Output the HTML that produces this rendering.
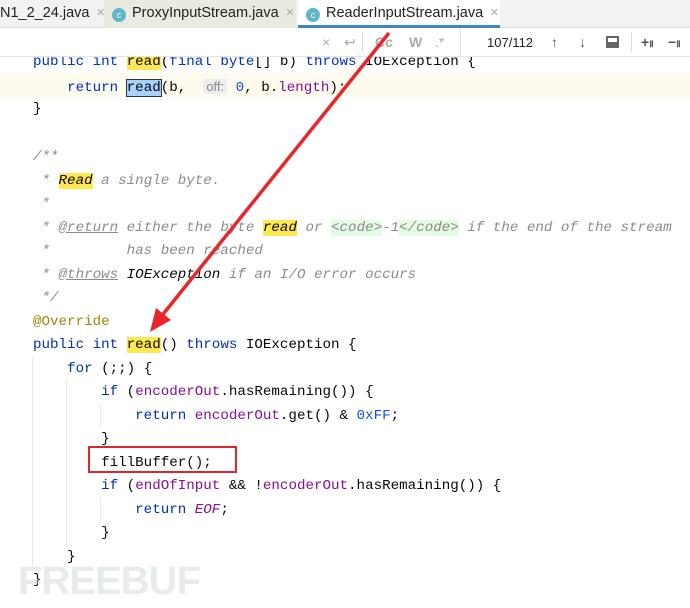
<!DOCTYPE html>
<html><head><meta charset="utf-8"><style>
*{margin:0;padding:0;box-sizing:border-box}
body{width:690px;height:608px;overflow:hidden;background:#fff;position:relative;font-family:"Liberation Mono",monospace}
.tabs{position:absolute;left:0;top:0;width:690px;height:28px;background:#f2f2f2;border-bottom:1px solid #ddd;font-family:"Liberation Sans",sans-serif;font-size:14.5px;color:#222}
.tab{position:absolute;top:0;height:28px;line-height:27px;white-space:nowrap}
.ic{display:inline-block;width:14px;height:14px;border-radius:50%;background:#5fb7c9;color:#fff;font-size:9px;line-height:14px;text-align:center;vertical-align:-1px;margin-right:6px}
.x{color:#aaa;margin-left:7px}
.search{position:absolute;left:0;top:28px;width:690px;height:29px;background:#fff;border-bottom:1px solid #e3e3e3;z-index:3;font-family:"Liberation Sans",sans-serif;color:#888;font-size:14px}
.search span{position:absolute;top:6px}
.code{position:absolute;left:0;top:2px;width:690px;font-size:14.2px;color:#080808}
.l{position:absolute;left:33px;height:23.5px;line-height:23.5px;white-space:pre}
.k{color:#0033b3}.f{color:#871094}.n{color:#1750eb}
.c{color:#8c8c8c;font-style:italic}
.hl{background:#ffe74f}
.g{background:#e4fbe4}
.u{text-decoration:underline}
.a{color:#9e880d}
</style></head><body>
<div class="tabs">
<div class="tab" style="left:0;padding-right:8px">N1_2_24.java<span class="x">×</span></div>
<div class="tab" style="left:104px;width:192px;background:#eaeae0;padding-left:8px"><span class="ic">c</span>ProxyInputStream.java<span class="x">×</span></div>
<div class="tab" style="left:298px;width:202px;background:#fff;padding-left:8px;border-bottom:3px solid #4083c9"><span class="ic">c</span>ReaderInputStream.java<span class="x">×</span></div>
</div>
<div class="search">
<span style="left:322px;color:#aaa">×</span><span style="left:344px;color:#aaa">↩</span>
<div style="position:absolute;left:362px;top:4px;width:1px;height:20px;background:#ddd"></div>
<span style="left:375px;font-weight:bold;color:#aaa">Cc</span><span style="left:409px;font-weight:bold;color:#aaa">W</span><span style="left:435px;color:#aaa">.*</span>
<div style="position:absolute;left:460px;top:0;width:1px;height:29px;background:#e3e3e3"></div>
<span style="left:487px;color:#222;font-size:13px;top:7px">107/112</span>
<span style="left:551px;color:#555">↑</span><span style="left:579px;color:#555">↓</span>
<div style="position:absolute;left:606px;top:8px;width:13px;height:12px;border:2px solid #666;border-top-width:2px;background:linear-gradient(#fff 50%,#666 50%)"></div>
<div style="position:absolute;left:631px;top:4px;width:1px;height:20px;background:#ddd"></div>
<span style="left:641px;color:#555;font-weight:bold">+<small style="font-size:9px">Ⅱ</small></span><span style="left:668px;color:#555;font-weight:bold">−<small style="font-size:9px">Ⅱ</small></span>
</div>
<div style="position:absolute;left:0;top:73px;width:690px;height:24px;background:#fdfbee"></div>
<div class="code">
<div class="l" style="top:49px"><span class="k">public int </span><span class="hl">read</span>(<span class="k">final byte</span>[] b) <span class="k">throws</span> IOException {</div>
<div class="l" style="top:72.5px">    <span class="k">return </span><span style="background:#a6d2ff;outline:1px solid #333">read</span>(b,  <span style="background:#eee;color:#888;font-family:'Liberation Sans';font-size:13px;padding:0 3px">off:</span> <span class="n">0</span>, b.<span class="f">length</span>);</div>
<div class="l" style="top:96px">}</div>
<div class="l c" style="top:144px">/**</div>
<div class="l c" style="top:167.5px"> * <span class="hl" style="color:#080808">Read</span> a single byte.</div>
<div class="l c" style="top:191px"> *</div>
<div class="l c" style="top:214.5px"> * <span class="u">@return</span> either the byte <span class="hl" style="color:#080808">read</span> or <span class="g">&lt;code&gt;</span>-1<span class="g">&lt;/code&gt;</span> if the end of the stream</div>
<div class="l c" style="top:238px"> *         has been reached</div>
<div class="l c" style="top:261.5px"> * <span class="u">@throws</span> <span style="color:#080808">IOException</span> if an I/O error occurs</div>
<div class="l c" style="top:285px"> */</div>
<div class="l a" style="top:308.5px">@Override</div>
<div class="l" style="top:332px"><span class="k">public int </span><span class="hl">read</span>() <span class="k">throws</span> IOException {</div>
<div class="l" style="top:355.5px">    <span class="k">for</span> (;;) {</div>
<div class="l" style="top:379px">        <span class="k">if</span> (<span class="f">encoderOut</span>.hasRemaining()) {</div>
<div class="l" style="top:402.5px">            <span class="k">return </span><span class="f">encoderOut</span>.get() &amp; <span class="n">0xFF</span>;</div>
<div class="l" style="top:426px">        }</div>
<div class="l" style="top:449.5px">        fillBuffer();</div>
<div class="l" style="top:473px">        <span class="k">if</span> (<span class="f">endOfInput</span> &amp;&amp; !<span class="f">encoderOut</span>.hasRemaining()) {</div>
<div class="l" style="top:496.5px">            <span class="k">return </span><span class="f" style="font-style:italic">EOF</span>;</div>
<div class="l" style="top:520px">        }</div>
<div class="l" style="top:543.5px">    }</div>
<div class="l" style="top:567px">}</div>
</div>
<div style="position:absolute;left:32px;top:357px;width:1px;height:210px;background:#e8e8e8"></div>
<div style="position:absolute;left:66px;top:380px;width:1px;height:165px;background:#e8e8e8"></div>
<div style="position:absolute;left:100px;top:404px;width:1px;height:22px;background:#e8e8e8"></div>
<div style="position:absolute;left:100px;top:498px;width:1px;height:22px;background:#e8e8e8"></div>
<div style="position:absolute;left:88px;top:446px;width:149px;height:27px;border:2px solid #e0262a"></div>
<div style="position:absolute;left:18px;top:561px;font-family:'Liberation Sans',sans-serif;font-weight:bold;font-size:40px;letter-spacing:-1px;color:rgba(200,215,205,0.45);line-height:40px">FREEBUF</div>
<svg style="position:absolute;left:0;top:0;z-index:5" width="690" height="608">
<line x1="389" y1="33" x2="160" y2="318" stroke="#e8262a" stroke-width="3.5"/>
<polygon points="150,332 156,308 171,320" fill="#e8262a"/>
</svg>
</body></html>
